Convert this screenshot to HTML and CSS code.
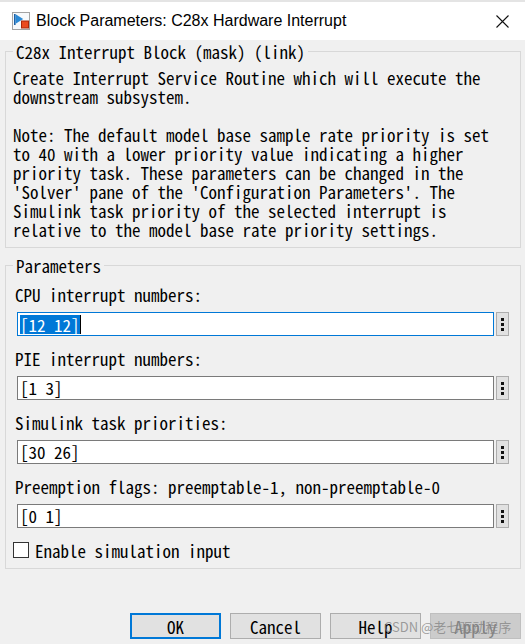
FILE: index.html
```html
<!DOCTYPE html>
<html lang="en">
<head>
<meta charset="utf-8">
<title>Block Parameters: C28x Hardware Interrupt</title>
<link rel="stylesheet" href="styles.css">
</head>
<body>
<div class="window">
  <div class="titlebar">
    <svg class="app-icon" width="18" height="18" viewBox="0 0 18 18">
      <rect x="0.5" y="0.5" width="17" height="17" fill="#f7f9fb" stroke="#a3a3a3"/>
      <rect x="2" y="2" width="1.6" height="11" fill="#1c62a8"/>
      <path d="M3.6 2.2 L11.2 7 L3.6 11.8 Z" fill="#2b8ad6"/>
      <rect x="9.5" y="9" width="7" height="7" fill="#ea4a1f" stroke="#a8280c"/>
    </svg>
    <span class="title">Block Parameters: C28x Hardware Interrupt</span>
    <svg class="close" width="13" height="13" viewBox="0 0 13 13">
      <path d="M0.5 0.5 L12.5 12.5 M12.5 0.5 L0.5 12.5" stroke="#111" stroke-width="1.1" fill="none"/>
    </svg>
  </div>

  <div class="content">
    <fieldset class="group desc">
      <legend>C28x Interrupt Block (mask) (link)</legend>
      <p>Create Interrupt Service Routine which will execute the<br>downstream subsystem.</p>
      <p>Note: The default model base sample rate priority is set<br>to 40 with a lower priority value indicating a higher<br>priority task. These parameters can be changed in the<br>'Solver' pane of the 'Configuration Parameters'. The<br>Simulink task priority of the selected interrupt is<br>relative to the model base rate priority settings.</p>
    </fieldset>

    <fieldset class="group params">
      <legend>Parameters</legend>

      <div class="field">
        <div class="label">CPU interrupt numbers:</div>
        <div class="input-row">
          <div class="input focused"><span class="sel">[12 12]</span><span class="caret"></span></div>
          <div class="more"><i></i><i></i><i></i></div>
        </div>
      </div>

      <div class="field">
        <div class="label">PIE interrupt numbers:</div>
        <div class="input-row">
          <div class="input">[1 3]</div>
          <div class="more"><i></i><i></i><i></i></div>
        </div>
      </div>

      <div class="field">
        <div class="label">Simulink task priorities:</div>
        <div class="input-row">
          <div class="input">[30 26]</div>
          <div class="more"><i></i><i></i><i></i></div>
        </div>
      </div>

      <div class="field">
        <div class="label">Preemption flags: preemptable-1, non-preemptable-0</div>
        <div class="input-row">
          <div class="input">[0 1]</div>
          <div class="more"><i></i><i></i><i></i></div>
        </div>
      </div>

      <div class="check-row">
        <span class="checkbox"></span>
        <span class="check-label">Enable simulation input</span>
      </div>
    </fieldset>

    <div class="buttons">
      <div class="btn default">OK</div>
      <div class="btn">Cancel</div>
      <div class="btn">Help</div>
      <div class="btn disabled">Apply</div>
    </div>
    <div class="watermark">CSDN @老七驱动程序</div>
  </div>
</div>
</body>
</html>
```

FILE: styles.css
```css
* { box-sizing: border-box; }

html, body {
  margin: 0;
  height: 100%;
}

body {
  background: #f0f0f0;
  color: #000;
  font-family: "Noto Sans Mono CJK SC", "Liberation Mono", monospace;
  font-size: 17px;
  line-height: 19px;
  overflow: hidden;
}

.window {
  position: relative;
  height: 644px;
}

.titlebar {
  height: 40px;
  background: #fff;
  border-top: 2px solid #e4e4e4;
  display: flex;
  align-items: center;
  padding-left: 12px;
}

.app-icon { flex: none; }

.title {
  margin-left: 6px;
  font-family: "Liberation Sans", Arial, sans-serif;
  font-size: 16px;
  line-height: 20px;
  color: #000;
  flex: 1;
}

.close {
  flex: none;
  margin-right: 16px;
}

.content {
  position: relative;
}

.group {
  border: 1px solid #d8d8d8;
  min-width: 0;
}

.group legend {
  padding: 0 3px;
  font: inherit;
  line-height: 19px;
}

.desc {
  margin: 2px 4px 0 5px;
  padding: 7px 7px 8px 7px;
}

.desc p {
  margin: 0;
}

.desc p + p {
  margin-top: 19px;
}

.params {
  margin: 8px 4px 0 5px;
  padding: 10px 7px 10px 7px;
}

.field {
  margin-bottom: 13px;
}

.label {
  padding-left: 2px;
  line-height: 20px;
  margin-bottom: 7px;
  white-space: nowrap;
}

.input-row {
  display: flex;
  gap: 2px;
  margin-left: 4px;
  margin-right: 4px;
  height: 24px;
}

.input {
  flex: 1;
  background: #fff;
  border: 1px solid #7a7a7a;
  padding: 1px 2px;
  line-height: 20px;
  display: flex;
  align-items: center;
  white-space: nowrap;
}

.input.focused {
  border-color: #0078d7;
}

.sel {
  background: #0078d7;
  color: #fff;
  line-height: 19px;
}

.caret {
  width: 1px;
  height: 19px;
  background: #000;
}

.more {
  flex: none;
  width: 13px;
  border: 1px solid #adadad;
  background: #e1e1e1;
  display: flex;
  flex-direction: column;
  align-items: center;
  justify-content: center;
  gap: 2px;
}

.more i {
  display: block;
  width: 3px;
  height: 3px;
  background: #111;
}

.check-row {
  display: flex;
  align-items: center;
  margin-top: 14px;
  height: 16px;
}

.checkbox {
  width: 16px;
  height: 16px;
  background: #fff;
  border: 1px solid #333;
  flex: none;
}

.check-label {
  margin-left: 6px;
  line-height: 19px;
}

.buttons {
  display: flex;
  justify-content: flex-end;
  gap: 9px;
  margin-top: 44px;
  padding-right: 4px;
}

.btn {
  width: 91px;
  height: 26px;
  border: 1px solid #adadad;
  background: #e1e1e1;
  display: flex;
  align-items: center;
  justify-content: center;
  line-height: 19px;
}

.btn.default {
  border: 2px solid #0078d7;
}

.btn.disabled {
  background: #cccccc;
  border-color: #bfbfbf;
  color: #838383;
}

.watermark {
  position: absolute;
  left: 384px;
  top: 577px;
  font-family: "Noto Sans CJK SC", "Noto Sans", sans-serif;
  font-size: 13px;
  line-height: 16px;
  color: rgba(130, 130, 130, 0.75);
  white-space: nowrap;
  pointer-events: none;
}
```
